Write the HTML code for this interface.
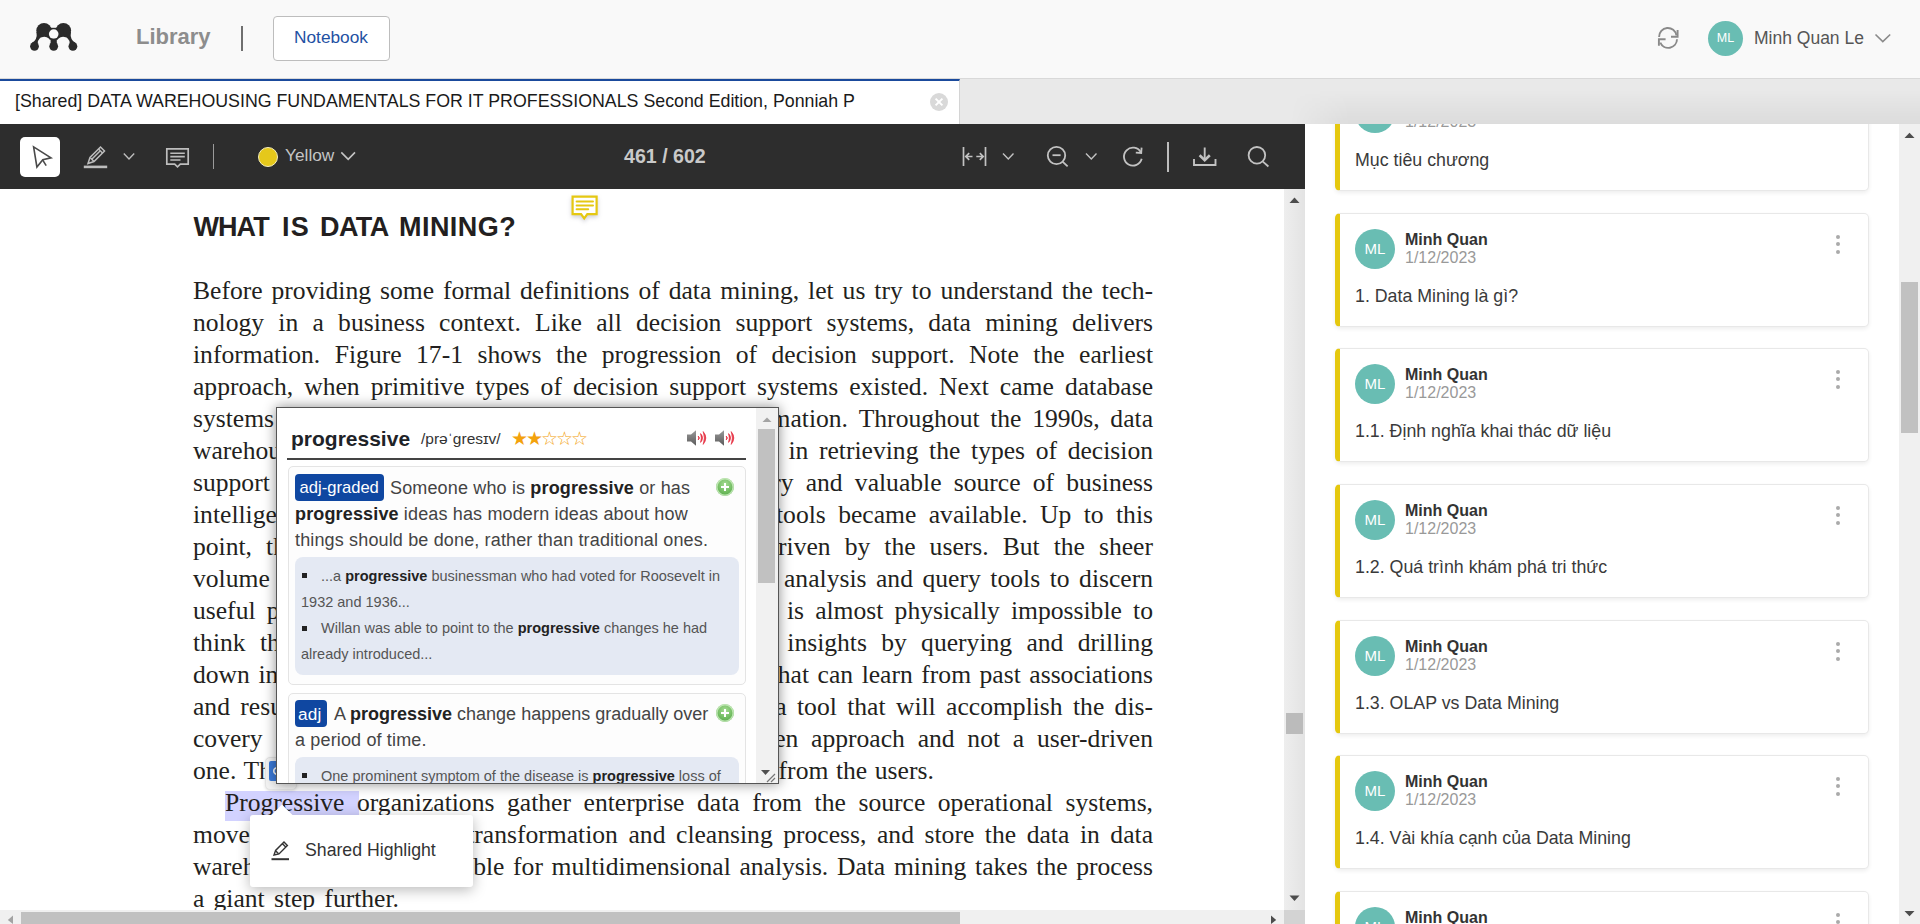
<!DOCTYPE html>
<html><head><meta charset="utf-8">
<style>
*{box-sizing:border-box;margin:0;padding:0}
html,body{width:1920px;height:924px;overflow:hidden;background:#fff;font-family:"Liberation Sans",sans-serif}
.a{position:absolute}
#hdr{position:absolute;left:0;top:0;width:1920px;height:79px;background:#f9f9f9;border-bottom:1px solid #d9d9d9}
#tabs{position:absolute;left:0;top:79px;width:1920px;height:45px;background:#e9e9e9}
#tab{position:absolute;left:0;top:0;width:960px;height:45px;background:#fff;border-top:2px solid #1a4a9c;border-right:1px solid #d4d4d4}
#tb{position:absolute;left:0;top:124px;width:1305px;height:65px;background:#2d2d2d}
#doc{position:absolute;left:0;top:189px;width:1305px;height:735px;background:#fff;overflow:hidden}
#side{position:absolute;left:1305px;top:124px;width:615px;height:800px;background:#fff;overflow:hidden}
.card{position:absolute;left:30px;width:534px;height:114px;background:#fff;border:1px solid #e8e8e8;border-left:5px solid #e5c80f;border-radius:5px;box-shadow:0 2px 4px rgba(0,0,0,0.07)}
.av{position:absolute;left:15px;top:15px;width:40px;height:40px;border-radius:50%;background:#69bdb3;color:#fff;font-size:15px;text-align:center;line-height:40px}
.nm{position:absolute;left:65px;top:17px;font-size:16px;line-height:18px;font-weight:bold;color:#333}
.dt{position:absolute;left:65px;top:35px;font-size:16px;line-height:18px;color:#999}
.bd{position:absolute;left:15px;top:72px;font-size:17.8px;line-height:20px;color:#3a3a3a}
.kb{position:absolute;left:496px;top:21px;width:4px}
.kb i{display:block;width:4px;height:4px;border-radius:50%;background:#aaa;margin-bottom:3.4px}
.dl{position:absolute;white-space:pre;font-family:"Liberation Serif",serif;font-size:25.6px;line-height:32px;margin-top:-24.64px;color:#231f20}
.hl{background:rgba(165,165,255,0.55)}
.ic{position:absolute;overflow:visible}
.hd{position:absolute;top:211.6px;font-size:27px;line-height:30px;font-weight:bold;color:#231f20;white-space:pre}
</style><style>
.pw{position:absolute;white-space:pre;line-height:26px;margin-top:-19.5px}
.pd{position:absolute;white-space:pre;font-size:18px;line-height:26px;margin-top:-19.24px;color:#444;letter-spacing:0.15px}
.pd b{color:#222}
.pe{position:absolute;white-space:pre;font-size:14.5px;line-height:26px;margin-top:-17.9px;color:#555}
.pe b{color:#222}
.blt{width:5px;height:5px;background:#222}
.plus{position:absolute;width:18px;height:18px;border-radius:50%;background:radial-gradient(circle at 50% 35%,#a6dc93,#5aae4b 75%,#7cc46c);box-shadow:inset 0 0 0 1.6px rgba(220,245,210,.7)}
.plus:before{content:"";position:absolute;left:4.8px;top:7.8px;width:8.4px;height:2.6px;background:#fff}
.plus:after{content:"";position:absolute;left:7.7px;top:4.9px;width:2.6px;height:8.4px;background:#fff}
</style></head><body>
<div id="hdr"></div>
<!-- logo -->
<svg class="ic" style="left:0;top:0" width="100" height="70" viewBox="0 0 100 70">
 <g fill="#2b2b2b">
  <circle cx="44" cy="30.6" r="7.7"/><circle cx="63.4" cy="30.6" r="7.7"/>
  <rect x="44" y="27.8" width="19.4" height="12"/>
  <path d="M36.5 32 Q37.8 40 31.5 43.2 L40 47 L41 32 Z"/>
  <path d="M70.9 32 Q69.6 40 75.9 43.2 L67.4 47 L66.4 32 Z"/>
 </g>
 <circle cx="44.25" cy="43.2" r="6.5" fill="#f9f9f9"/>
 <circle cx="63.15" cy="43.2" r="6.5" fill="#f9f9f9"/>
 <rect x="37.75" y="43.2" width="31.9" height="10" fill="#f9f9f9"/>
 <circle cx="53.7" cy="34.1" r="4.8" fill="#f9f9f9"/>
 <g fill="#2b2b2b">
  <circle cx="34.5" cy="46.3" r="4.4"/><circle cx="53.7" cy="46.3" r="4.4"/><circle cx="72.9" cy="46.3" r="4.4"/>
  <rect x="50.6" y="38.6" width="6.2" height="8"/>
 </g>
</svg>
<div class="a" style="left:136px;top:24px;font-size:22px;line-height:26px;font-weight:bold;color:#8d8d8d">Library</div>
<div class="a" style="left:241px;top:26px;width:2px;height:25px;background:#6f6f6f"></div>
<div class="a" style="left:273px;top:16px;width:117px;height:45px;border:1px solid #bdbdbd;border-radius:4px;background:#fff"></div>
<div class="a" style="left:294px;top:27px;font-size:17.3px;line-height:20px;color:#1f51a3">Notebook</div>
<!-- sync -->
<svg class="ic" style="left:1656px;top:26px" width="24" height="24" viewBox="0 0 24 24" fill="none" stroke="#8a8a8a" stroke-width="1.9">
 <path d="M3.1 10.9 A8.7 8.7 0 0 1 20.4 9.4"/><path d="M21.6 4 L21.6 10.7 L15 10.7"/>
 <path d="M21 13.3 A8.7 8.7 0 0 1 4.3 16.6"/><path d="M2.9 19.8 L2.9 13.2 L9.6 13.2"/>
</svg>
<div class="a" style="left:1708px;top:21px;width:35px;height:35px;border-radius:50%;background:#69bdb3;color:#fff;font-size:12.5px;line-height:35px;text-align:center">ML</div>
<div class="a" style="left:1754px;top:28px;font-size:17.5px;line-height:20px;color:#555">Minh Quan Le</div>
<svg class="ic" style="left:1874px;top:32px" width="18" height="12" viewBox="0 0 18 12" fill="none" stroke="#8a8a8a" stroke-width="1.6"><path d="M1.5 2.5 L8.8 9.6 L16.2 2.5"/></svg>

<div id="tabs"><div id="tab"></div></div>
<div class="a" style="left:15px;top:91px;font-size:17.8px;line-height:20px;color:#1a1a1a;white-space:pre">[Shared] DATA WAREHOUSING FUNDAMENTALS FOR IT PROFESSIONALS Second Edition, Ponniah P</div>
<div class="a" style="left:930px;top:93px;width:18px;height:18px;border-radius:50%;background:#d9d9d9"></div>
<svg class="ic" style="left:930px;top:93px" width="18" height="18" viewBox="0 0 18 18" stroke="#fff" stroke-width="2"><path d="M5.6 5.6 L12.4 12.4 M12.4 5.6 L5.6 12.4"/></svg>

<div id="tb"></div>
<div class="a" style="left:20px;top:137px;width:40px;height:40px;border-radius:5px;background:#fff"></div>
<svg class="ic" style="left:20px;top:137px" width="40" height="40" viewBox="0 0 40 40" fill="none" stroke="#4a4a4a" stroke-width="1.6" stroke-linejoin="miter">
 <path d="M13.6 9.8 L31 20.9 L22.8 22.7 L16.9 30 Z"/><path d="M22.6 22.8 L26.2 28.6"/>
</svg>
<svg class="ic" style="left:82px;top:144px" width="28" height="26" viewBox="0 0 28 26" fill="none" stroke="#bdbdbd" stroke-width="1.5">
 <path d="M6 19.5 L8 13.5 L18.5 3 L22.5 7 L12 17.5 Z"/><path d="M16.5 5 L20.5 9"/><path d="M8.5 14 L11.8 17.3"/><path d="M9.8 15.2 L18 7"/>
 <path d="M1.8 22.9 L25.2 22.9" stroke-width="2.6"/>
</svg>
<svg class="ic" style="left:121px;top:151px" width="16" height="10" viewBox="0 0 16 10" fill="none" stroke="#bdbdbd" stroke-width="1.4"><path d="M2.8 2.6 L8 7.9 L13.2 2.6"/></svg>
<svg class="ic" style="left:164px;top:146px" width="28" height="24" viewBox="0 0 28 24" fill="none" stroke="#bdbdbd" stroke-width="1.7">
 <path d="M2.8 2.8 L24.2 2.8 L24.2 18.2 L16.3 18.2 L13.5 20.8 L10.7 18.2 L2.8 18.2 Z"/>
 <path d="M6.3 7.2 L20.8 7.2 M6.3 10.6 L20.8 10.6 M6.3 14 L16.5 14" stroke-width="1.6"/>
</svg>
<div class="a" style="left:213px;top:144px;width:1px;height:25px;background:#9a9a9a"></div>
<div class="a" style="left:257.5px;top:146.5px;width:20px;height:20px;border-radius:50%;background:#e5c81b;border:1.5px solid #f4eebd"></div>
<div class="a" style="left:285px;top:145px;font-size:17.3px;line-height:20px;color:#c4c4c4">Yellow</div>
<svg class="ic" style="left:339px;top:150px" width="18" height="12" viewBox="0 0 18 12" fill="none" stroke="#c4c4c4" stroke-width="1.6"><path d="M2.3 2.4 L9.2 9.4 L16 2.4"/></svg>
<div class="a" style="left:624px;top:144px;font-size:19.6px;line-height:24px;font-weight:bold;color:#c9c9c9">461 / 602</div>
<!-- right toolbar icons -->
<svg class="ic" style="left:960px;top:144px" width="30" height="26" viewBox="0 0 30 26" fill="none" stroke="#c2c2c2" stroke-width="1.7">
 <path d="M3.5 3 L3.5 22 M25.5 3 L25.5 22"/>
 <path d="M5.8 12.5 L12.5 12.5 M9.2 9.2 L5.8 12.5 L9.2 15.8"/>
 <path d="M16.3 12.5 L23.2 12.5 M19.8 9.2 L23.2 12.5 L19.8 15.8"/>
</svg>
<svg class="ic" style="left:1000px;top:151px" width="16" height="10" viewBox="0 0 16 10" fill="none" stroke="#c2c2c2" stroke-width="1.4"><path d="M3 2.6 L8.3 7.9 L13.5 2.6"/></svg>
<svg class="ic" style="left:1044px;top:144px" width="28" height="26" viewBox="0 0 28 26" fill="none" stroke="#c2c2c2" stroke-width="1.8">
 <circle cx="12.5" cy="11.5" r="8.7"/><path d="M18.8 17.8 L23.6 22.4"/><path d="M8.5 11.2 L16.6 11.2"/>
</svg>
<svg class="ic" style="left:1083px;top:151px" width="16" height="10" viewBox="0 0 16 10" fill="none" stroke="#c2c2c2" stroke-width="1.4"><path d="M3 2.6 L8.3 7.9 L13.5 2.6"/></svg>
<svg class="ic" style="left:1119px;top:144px" width="28" height="26" viewBox="0 0 28 26" fill="none" stroke="#c2c2c2" stroke-width="1.8">
 <path d="M21.8 8.2 A9 9 0 1 0 22.7 14.8"/><path d="M22.6 3.6 L22.2 9 L16.8 8.6"/>
</svg>
<div class="a" style="left:1167px;top:142px;width:2px;height:30px;background:#bdbdbd"></div>
<svg class="ic" style="left:1190px;top:144px" width="30" height="26" viewBox="0 0 30 26" fill="none" stroke="#c2c2c2" stroke-width="1.9">
 <path d="M4 15 L4 21 L25.5 21 L25.5 15"/><path d="M14.7 3.5 L14.7 16"/><path d="M9.6 11.3 L14.7 16.3 L19.8 11.3" stroke-width="2.6"/>
</svg>
<svg class="ic" style="left:1245px;top:144px" width="28" height="26" viewBox="0 0 28 26" fill="none" stroke="#c2c2c2" stroke-width="1.8">
 <circle cx="11.9" cy="11.3" r="8.3"/><path d="M17.9 17.6 L23.4 22.5"/>
</svg>
<div id="doc"></div>
<div class="a" style="left:0;top:0;width:1284px;height:910px;clip-path:inset(189px 0 0 0);overflow:hidden">
<div class="hd" style="left:193.4px;letter-spacing:-0.9px">WHAT</div><div class="hd" style="left:282px;letter-spacing:1.2px">IS</div><div class="hd" style="left:320px;letter-spacing:-0.6px">DATA</div><div class="hd" style="left:399px;letter-spacing:0.45px">MINING?</div>
<svg class="ic" style="left:570px;top:194px;filter:drop-shadow(0 2px 2px rgba(60,60,90,.25))" width="30" height="30" viewBox="0 0 30 30">
 <path d="M2.6 2.6 L26.6 2.6 L26.6 20.2 L17.3 20.2 L14.2 24.4 L11.1 20.2 L2.6 20.2 Z" fill="#fff" stroke="#e5c812" stroke-width="2.2" stroke-linejoin="miter"/>
 <path d="M6.6 7.5 L23 7.5 M6.6 11.4 L23 11.4 M6.6 15.3 L18.2 15.3" stroke="#e5c812" stroke-width="2" stroke-linecap="round"/>
</svg>
<div class="a" style="left:225px;top:791px;width:134px;height:29.5px;background:rgba(165,165,255,0.5)"></div>
<div class="dl" style="left:193.00px;top:300.00px;word-spacing:2.520px">Before providing some formal definitions of data mining, let us try to understand the tech-</div>
<div class="dl" style="left:193.00px;top:332.00px;word-spacing:7.850px">nology in a business context. Like all decision support systems, data mining delivers</div>
<div class="dl" style="left:193.00px;top:364.00px;word-spacing:8.114px">information. Figure 17-1 shows the progression of decision support. Note the earliest</div>
<div class="dl" style="left:193.00px;top:396.00px;word-spacing:4.632px">approach, when primitive types of decision support systems existed. Next came database</div>
<div class="dl" style="left:858.70px;top:428.00px;word-spacing:4.272px">Throughout the 1990s, data</div>
<div class="dl" style="left:720.79px;top:428.00px;word-spacing:4.272px">information.</div>
<div class="dl" style="left:193.00px;top:428.00px;word-spacing:4.272px">systems providing</div>
<div class="dl" style="left:788.40px;top:460.00px;word-spacing:4.261px">in retrieving the types of decision</div>
<div class="dl" style="left:193.00px;top:460.00px;word-spacing:4.261px">warehouses with</div>
<div class="dl" style="left:805.70px;top:492.00px;word-spacing:5.798px">and valuable source of business</div>
<div class="dl" style="left:712.46px;top:492.00px;word-spacing:5.798px">primary</div>
<div class="dl" style="left:193.00px;top:492.00px;word-spacing:5.798px">support information</div>
<div class="dl" style="left:838.20px;top:524.00px;word-spacing:6.032px">became available. Up to this</div>
<div class="dl" style="left:775.98px;top:524.00px;word-spacing:6.032px">tools</div>
<div class="dl" style="left:193.00px;top:524.00px;word-spacing:6.032px">intelligence. Then</div>
<div class="dl" style="left:844.70px;top:556.00px;word-spacing:7.638px">by the users. But the sheer</div>
<div class="dl" style="left:765.27px;top:556.00px;word-spacing:7.638px">driven</div>
<div class="dl" style="left:193.00px;top:556.00px;word-spacing:7.638px">point, the approach</div>
<div class="dl" style="left:784.00px;top:588.00px;word-spacing:3.147px">analysis and query tools to discern</div>
<div class="dl" style="left:193.00px;top:588.00px;word-spacing:3.147px">volume of data</div>
<div class="dl" style="left:786.90px;top:620.00px;word-spacing:4.791px">is almost physically impossible to</div>
<div class="dl" style="left:193.00px;top:620.00px;word-spacing:4.791px">useful patterns.</div>
<div class="dl" style="left:787.30px;top:652.00px;word-spacing:7.894px">insights by querying and drilling</div>
<div class="dl" style="left:193.00px;top:652.00px;word-spacing:7.894px">think through</div>
<div class="dl" style="left:817.60px;top:684.00px;word-spacing:2.120px">can learn from past associations</div>
<div class="dl" style="left:770.68px;top:684.00px;word-spacing:2.120px">that</div>
<div class="dl" style="left:193.00px;top:684.00px;word-spacing:2.120px">down into the</div>
<div class="dl" style="left:797.00px;top:716.00px;word-spacing:3.956px">tool that will accomplish the dis-</div>
<div class="dl" style="left:775.26px;top:716.00px;word-spacing:3.956px">a</div>
<div class="dl" style="left:193.00px;top:716.00px;word-spacing:3.956px">and results, and</div>
<div class="dl" style="left:811.10px;top:748.00px;word-spacing:6.366px">approach and not a user-driven</div>
<div class="dl" style="left:732.94px;top:748.00px;word-spacing:6.366px">driven</div>
<div class="dl" style="left:193.00px;top:748.00px;word-spacing:6.366px">covery of knowledge</div>
<div class="dl" style="left:628.50px;top:844.00px;word-spacing:4.176px">and cleansing process, and store the data in data</div>
<div class="dl" style="left:467.23px;top:844.00px;word-spacing:4.176px">transformation</div>
<div class="dl" style="left:193.00px;top:844.00px;word-spacing:4.176px">move the data</div>
<div class="dl" style="left:513.10px;top:876.00px;word-spacing:2.260px">for multidimensional analysis. Data mining takes the process</div>
<div class="dl" style="left:424.82px;top:876.00px;word-spacing:2.260px">suitable</div>
<div class="dl" style="left:193.00px;top:876.00px;word-spacing:2.260px">warehouses in a</div>
<div class="dl" style="left:225.00px;top:812.00px;word-spacing:6.189px">Progressive organizations gather enterprise data from the source operational systems,</div>
<div class="dl" style="left:193.00px;top:780.00px;word-spacing:1.200px">one. This</div>
<div class="dl" style="left:778.60px;top:780.00px;word-spacing:1.200px">from the users.</div>
<div class="dl" style="left:193.00px;top:908.00px;word-spacing:2.800px">a giant step further.</div></div>
<!-- doc scrollbars -->
<div class="a" style="left:1284px;top:189px;width:21px;height:721px;background:linear-gradient(90deg,#eeeeee,#e3e3e3)"></div>
<svg class="ic" style="left:1284px;top:189px" width="21" height="20"><path d="M5.5 14 L15.5 14 L10.5 8.5 Z" fill="#4d4d4d"/></svg>
<svg class="ic" style="left:1284px;top:889px" width="21" height="20"><path d="M5.5 6.5 L15.5 6.5 L10.5 12 Z" fill="#4d4d4d"/></svg>
<div class="a" style="left:1286px;top:713px;width:17px;height:21px;background:#bbbbbb"></div>
<div class="a" style="left:0;top:910px;width:1284px;height:14px;background:#f0f0f0"></div>
<div class="a" style="left:21px;top:912px;width:939px;height:12px;background:#c1c1c1"></div>
<svg class="ic" style="left:0;top:910px" width="21" height="14"><path d="M13 5.5 L13 14 L7.8 10 Z" fill="#a3a3a3"/></svg>
<svg class="ic" style="left:1263px;top:910px" width="21" height="14"><path d="M8 5.5 L8 14 L13.2 10 Z" fill="#4d4d4d"/></svg>
<div class="a" style="left:1284px;top:910px;width:21px;height:14px;background:#d3d3d3"></div>
<!-- small selection icon -->
<div class="a" style="left:265px;top:757px;width:32px;height:33px;border-radius:5px;background:#f4f4f4;border:1px solid #e6e6e6;box-shadow:0 1px 3px rgba(0,0,0,.12)"></div>
<div class="a" style="left:269px;top:761px;width:18px;height:20px;background:#3b7bdb;border-radius:2px"></div><svg class="ic" style="left:269px;top:761px" width="18" height="20"><path d="M9.5 7.2 A3.2 3.2 0 1 0 9.5 12.8" stroke="#fff" stroke-width="1.6" fill="none"/></svg>
<!-- dictionary popup -->
<div class="a" style="left:276px;top:407px;width:503px;height:377px;border:1px solid #555;background:#fff;box-shadow:0 0 12px rgba(0,0,0,.45);overflow:hidden">
 <div class="a" style="left:-277px;top:-408px;width:1920px;height:924px">
  <div class="pw" style="left:291px;top:445px;font-size:21px;font-weight:bold;color:#1e2328">progressive</div>
  <div class="pw" style="left:421px;top:445px;font-size:15.5px;color:#333">/prəˈgresɪv/</div>
  <div class="pw" style="left:511px;top:445px;font-size:18.5px;color:#f3a20c;letter-spacing:-1.9px">★★☆☆☆</div>
  <svg class="ic" style="left:686px;top:429px" width="50" height="18" viewBox="0 0 50 18">
   <defs><linearGradient id="spk" x1="0" x2="0" y1="0" y2="1"><stop offset="0" stop-color="#9a9a9a"/><stop offset="1" stop-color="#5a5a5a"/></linearGradient></defs>
   <path d="M1 5.5 L5 5.5 L10 1.2 L10 16.8 L5 12.5 L1 12.5 Z" fill="url(#spk)"/>
   <path d="M12.2 7 Q14.6 9 12.2 11 Q13.4 9 12.2 7 Z M14.6 4.6 Q18.4 9 14.6 13.4 Q16.2 9 14.6 4.6 Z M17.2 2.6 Q22.4 9 17.2 15.4 Q19.6 9 17.2 2.6 Z" fill="#e52a3c" stroke="#e52a3c" stroke-width="0.7"/>
   <path d="M29 5.5 L33 5.5 L38 1.2 L38 16.8 L33 12.5 L29 12.5 Z" fill="url(#spk)"/>
   <path d="M40.2 7 Q42.6 9 40.2 11 Q41.4 9 40.2 7 Z M42.6 4.6 Q46.4 9 42.6 13.4 Q44.2 9 42.6 4.6 Z M45.2 2.6 Q50.4 9 45.2 15.4 Q47.6 9 45.2 2.6 Z" fill="#e52a3c" stroke="#e52a3c" stroke-width="0.7"/>
  </svg>
  <div class="a" style="left:287px;top:458px;width:459px;height:2px;background:#444"></div>
  <div class="a" style="left:288px;top:466px;width:458px;height:219px;border:1px solid #e4e4e4;border-radius:5px;background:#fdfdfd"></div>
  <div class="a" style="left:295px;top:474px;width:89px;height:27px;border-radius:4px;background:#0f47a1"></div>
  <div class="pd" style="left:299.5px;top:494px;color:#fff;font-size:16.6px;letter-spacing:0">adj-graded</div>
  <div class="pd" style="left:390px;top:494px">Someone who is <b>progressive</b> or has</div>
  <div class="pd" style="left:295px;top:520px"><b>progressive</b> ideas has modern ideas about how</div>
  <div class="pd" style="left:295px;top:546px">things should be done, rather than traditional ones.</div>
  <div class="plus" style="left:716px;top:478px"></div>
  <div class="a" style="left:295px;top:557px;width:444px;height:118px;border-radius:8px;background:#e4e9f3"></div>
  <div class="a blt" style="left:302px;top:573px"></div>
  <div class="pe" style="left:321px;top:581px">...a <b>progressive</b> businessman who had voted for Roosevelt in</div>
  <div class="pe" style="left:301px;top:607px">1932 and 1936...</div>
  <div class="a blt" style="left:302px;top:626px"></div>
  <div class="pe" style="left:321px;top:633px">Willan was able to point to the <b>progressive</b> changes he had</div>
  <div class="pe" style="left:301px;top:659px">already introduced...</div>

  <div class="a" style="left:288px;top:693px;width:458px;height:219px;border:1px solid #e4e4e4;border-radius:5px;background:#fdfdfd"></div>
  <div class="a" style="left:295px;top:700px;width:32px;height:27px;border-radius:4px;background:#0f47a1"></div>
  <div class="pd" style="left:298px;top:720px;color:#fff;font-size:17.2px">adj</div>
  <div class="pd" style="left:334px;top:720px;letter-spacing:0">A <b>progressive</b> change happens gradually over</div>
  <div class="pd" style="left:295px;top:746px">a period of time.</div>
  <div class="plus" style="left:716px;top:704px"></div>
  <div class="a" style="left:295px;top:757px;width:444px;height:118px;border-radius:8px;background:#e4e9f3"></div>
  <div class="a blt" style="left:302px;top:773px"></div>
  <div class="pe" style="left:321px;top:781px">One prominent symptom of the disease is <b>progressive</b> loss of</div>

  <div class="a" style="left:756px;top:408px;width:22px;height:376px;background:#f1f1f1"></div>
  <div class="a" style="left:758px;top:429px;width:17px;height:154px;background:#c1c1c1"></div>
  <svg class="ic" style="left:756px;top:408px" width="22" height="20"><path d="M6.5 14 L15.5 14 L11 9.5 Z" fill="#a3a3a3"/></svg>
  <svg class="ic" style="left:756px;top:762px" width="22" height="22"><path d="M5 8 L14 8 L9.5 13 Z" fill="#505050"/><path d="M11 20 L19 12 M15 20 L19 16" stroke="#777" stroke-width="1.2"/></svg>
 </div>
</div>
<!-- highlight popup -->
<div class="a" style="left:250px;top:815px;width:223px;height:72px;background:#fff;border-radius:3px;box-shadow:0 3px 14px rgba(0,0,0,.28)"></div>
<svg class="ic" style="left:262px;top:801px" width="40" height="16"><path d="M8 15.5 L20 3.5 L32 15.5 Z" fill="#fff"/></svg>
<svg class="ic" style="left:268px;top:838px" width="26" height="26" viewBox="0 0 26 26" fill="none" stroke="#333" stroke-width="1.4">
 <path d="M6 17 L7.6 12.5 L16 4.1 L19.4 7.5 L11 15.9 Z"/><path d="M14.4 5.7 L17.8 9.1"/><path d="M7.8 13 L10.6 15.8"/>
 <path d="M3.5 21.2 L21 21.2" stroke-width="2"/>
</svg>
<div class="a" style="left:305px;top:840px;font-size:17.7px;line-height:20px;color:#333;white-space:pre">Shared Highlight</div>
<div id="side"></div>
<div class="a" style="left:1305px;top:0;width:594px;height:924px;clip-path:inset(124px 0 0 0)">
<div class="card" style="left:30px;top:77px"><div class="av">ML</div><div class="nm">Minh Quan</div><div class="dt">1/12/2023</div><div class="bd">Mục tiêu chương</div><div class="kb"><i></i><i></i><i></i></div></div>
<div class="card" style="left:30px;top:213px"><div class="av">ML</div><div class="nm">Minh Quan</div><div class="dt">1/12/2023</div><div class="bd">1. Data Mining là gì?</div><div class="kb"><i></i><i></i><i></i></div></div>
<div class="card" style="left:30px;top:348px"><div class="av">ML</div><div class="nm">Minh Quan</div><div class="dt">1/12/2023</div><div class="bd">1.1. Định nghĩa khai thác dữ liệu</div><div class="kb"><i></i><i></i><i></i></div></div>
<div class="card" style="left:30px;top:484px"><div class="av">ML</div><div class="nm">Minh Quan</div><div class="dt">1/12/2023</div><div class="bd">1.2. Quá trình khám phá tri thức</div><div class="kb"><i></i><i></i><i></i></div></div>
<div class="card" style="left:30px;top:620px"><div class="av">ML</div><div class="nm">Minh Quan</div><div class="dt">1/12/2023</div><div class="bd">1.3. OLAP vs Data Mining</div><div class="kb"><i></i><i></i><i></i></div></div>
<div class="card" style="left:30px;top:755px"><div class="av">ML</div><div class="nm">Minh Quan</div><div class="dt">1/12/2023</div><div class="bd">1.4. Vài khía cạnh của Data Mining</div><div class="kb"><i></i><i></i><i></i></div></div>
<div class="card" style="left:30px;top:891px"><div class="av">ML</div><div class="nm">Minh Quan</div><div class="dt">1/12/2023</div><div class="bd"></div><div class="kb"><i></i><i></i><i></i></div></div>
</div>
<div class="a" style="left:1290px;top:90px;width:630px;height:34px;background:linear-gradient(180deg,rgba(0,0,0,0),rgba(0,0,0,.055));-webkit-mask-image:linear-gradient(90deg,transparent,#000 60px)"></div>
<div class="a" style="left:1899px;top:124px;width:21px;height:800px;background:#f0f0f0"></div>
<svg class="ic" style="left:1899px;top:124px" width="21" height="20"><path d="M5.5 14 L15.5 14 L10.5 8.8 Z" fill="#4d4d4d"/></svg>
<svg class="ic" style="left:1899px;top:904px" width="21" height="20"><path d="M5.5 7 L15.5 7 L10.5 12.2 Z" fill="#4d4d4d"/></svg>
<div class="a" style="left:1901px;top:282px;width:17px;height:151px;background:#c1c1c1"></div>
</body></html>
